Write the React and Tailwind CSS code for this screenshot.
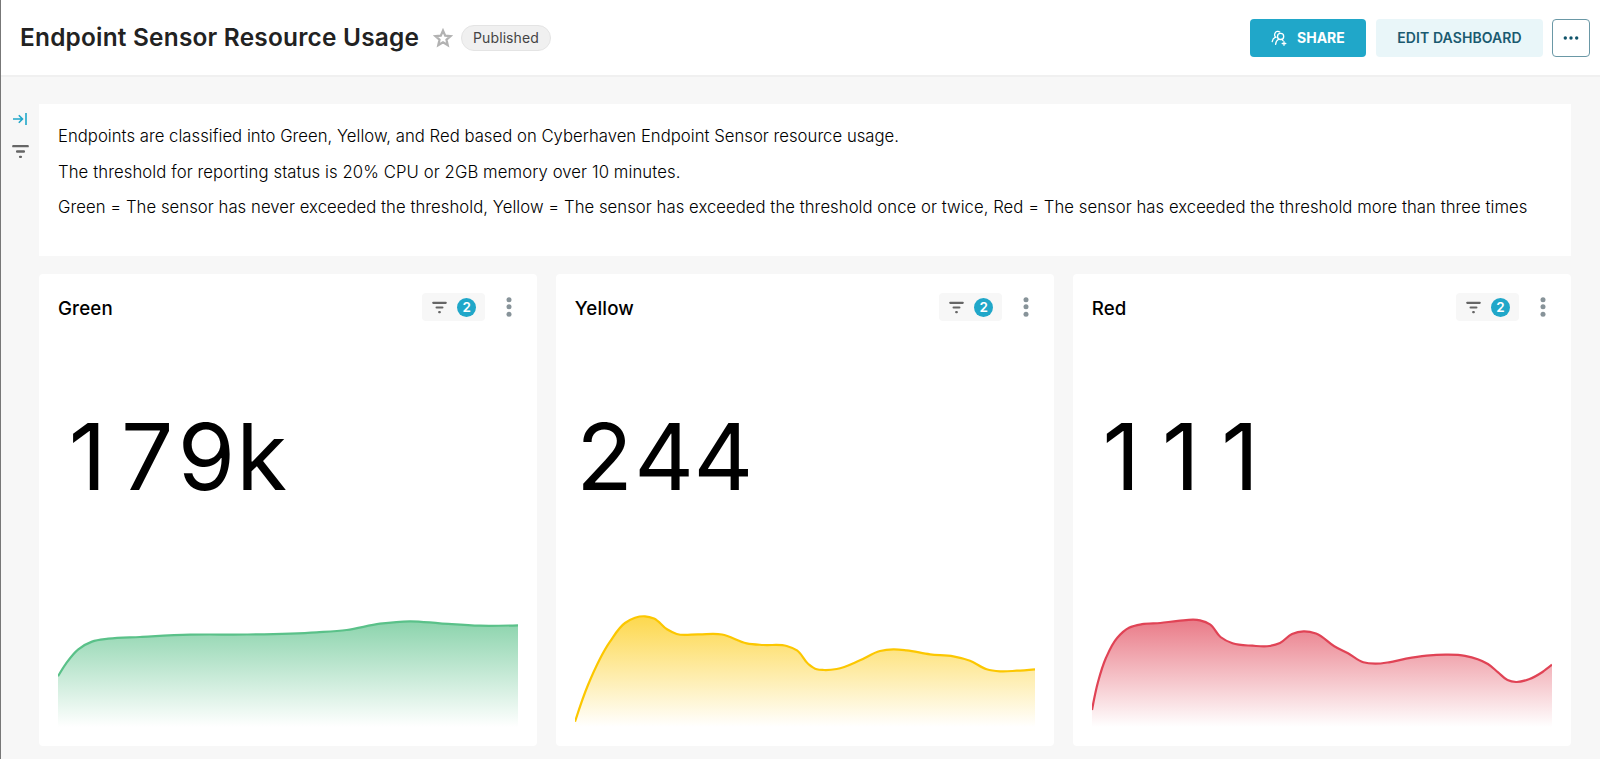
import React from 'react';

const cards = [
  {
    title: 'Green',
    value: '179k',
    color: '#5ac189',
    points: [
      [0, 76.3], [8, 63.6], [20.3, 49.3], [34, 41.6], [50.3, 38.7], [82, 37], [132, 34.7], [188.7, 34.5],
      [258.7, 32.3], [288.7, 30], [322, 23.7], [352, 21.3], [382, 23.3], [422, 25.7], [460, 25.3],
    ],
  },
  {
    title: 'Yellow',
    value: '244',
    color: '#fcc700',
    points: [
      [0, 121.7], [13, 85], [35, 41.7], [50, 23], [60, 17.7], [70, 16.3], [79, 18.5],
      [92, 29.3], [101.7, 34], [123.3, 34.3], [147, 34.5], [171.7, 43.3], [188.3, 45],
      [211.7, 46], [222, 50.4], [233.3, 64], [241.7, 69.3], [249, 70], [261.7, 69], [285, 60.3],
      [305, 51], [318.3, 49.3], [331.7, 50.3], [355, 54.3], [378.3, 56.3], [395, 60.7], [411.7, 69.3],
      [425, 71.3], [441.7, 70.7], [460, 69.3],
    ],
  },
  {
    title: 'Red',
    value: '111',
    color: '#e04355',
    points: [
      [0, 110], [6, 82], [13.8, 58.3], [25.3, 37.7], [37, 27.8], [50, 24.2], [68.3, 23], [86, 20.9],
      [108, 20.4], [118, 24.4], [128.5, 37], [140.5, 43.3], [160.4, 45.7], [177.5, 46], [188, 43],
      [200, 34], [211.6, 31.3], [224, 33.5], [242.3, 46.3], [256, 53.3], [271.3, 62.3], [283.3, 63.7],
      [296.9, 62.3], [314, 58.7], [334.5, 55.7], [354.9, 54.7], [373, 55.8], [395.9, 64], [406.1, 72.3],
      [415.5, 80], [424, 82], [436.9, 79.3], [450.5, 72], [460, 64.7],
    ],
  },
];

// Cubic through the points, tangents weighted by chord length
const smoothPath = (pts) => {
  const last = pts.length - 1;
  const len = pts.slice(1).map((p, i) => Math.hypot(p[0] - pts[i][0], p[1] - pts[i][1]));
  const dir = pts.slice(1).map((p, i) => [(p[0] - pts[i][0]) / len[i], (p[1] - pts[i][1]) / len[i]]);
  const tangent = pts.map((_, i) => {
    if (i === 0 || i === last) return [0, 0];
    const sum = len[i - 1] + len[i];
    return [0, 1].map((k) => (dir[i - 1][k] * len[i] + dir[i][k] * len[i - 1]) / sum);
  });
  tangent[0] = [0, 1].map((k) => 1.5 * dir[0][k] - 0.5 * tangent[1][k]);
  tangent[last] = [0, 1].map((k) => 1.5 * dir[last - 1][k] - 0.5 * tangent[last - 1][k]);

  let d = `M${pts[0][0]},${pts[0][1]}`;
  for (let i = 1; i <= last; i++) {
    const h = len[i - 1] / 3;
    const [a, b] = [pts[i - 1], pts[i]];
    const [ta, tb] = [tangent[i - 1], tangent[i]];
    d += `C${a[0] + ta[0] * h},${a[1] + ta[1] * h} ${b[0] - tb[0] * h},${b[1] - tb[1] * h} ${b[0]},${b[1]}`;
  }
  return d;
};

const FilterIcon = ({ className }) => (
  <svg viewBox="0 0 16 14" fill="none" stroke="#666" strokeWidth="2.2" strokeLinecap="round" className={className}>
    <path d="M1.2 2h13.6M4.8 7h6.4M7.6 12h.8" />
  </svg>
);

const Trend = ({ id, color, points }) => {
  const line = smoothPath(points);
  const top = Math.min(...points.map((p) => p[1]));
  return (
    <svg viewBox="0 0 460 127" className="block h-[127px] w-[460px]">
      <defs>
        <linearGradient id={id} gradientUnits="userSpaceOnUse" x1="0" y1={top} x2="0" y2="127">
          <stop offset="0" stopColor={color} />
          <stop offset="1" stopColor="#fff" />
        </linearGradient>
      </defs>
      <path d={`${line}V127H0Z`} fill={`url(#${id})`} opacity="0.7" />
      <path d={line} fill="none" stroke={color} strokeWidth="2.2" />
    </svg>
  );
};

// Digits sit in equal cells, a trailing unit keeps its own width
const BigNumber = ({ value }) => (
  <div className="mt-[85px] flex text-[92.6px] leading-[100px] text-black">
    {value.split('').map((char, i) => (
      <span key={i} className={/\d/.test(char) ? 'w-[59.4px] text-center' : ''}>
        {char}
      </span>
    ))}
  </div>
);

const MetricCard = ({ title, value, color, points }) => (
  <div className="flex h-[472px] flex-1 flex-col rounded bg-white p-[19px]">
    <div className="flex h-7 items-center">
      <h2 className="flex-1 pt-[3px] text-[18.7px] font-medium leading-7 tracking-[0.15px] text-black">{title}</h2>
      <div className="flex h-7 w-[63px] items-center justify-between rounded bg-[#f7f7f7] pl-2.5 pr-[9px]">
        <FilterIcon className="h-[13px] w-[15px]" />
        <span className="flex h-[19px] w-[19px] items-center justify-center rounded-full bg-[#20a7c9] pt-px text-[13.5px] font-semibold leading-none text-white">
          2
        </span>
      </div>
      <svg viewBox="0 0 6 20" fill="#879399" className="ml-[21px] mr-[6px] h-5 w-1.5">
        <circle cx="3" cy="2.8" r="2.5" />
        <circle cx="3" cy="9.8" r="2.5" />
        <circle cx="3" cy="17.2" r="2.5" />
      </svg>
    </div>
    <BigNumber value={value} />
    <div className="mt-auto">
      <Trend id={`trend-${title}`} color={color} points={points} />
    </div>
  </div>
);

const App = () => {
  return (
    <div className="h-[759px] w-[1600px] overflow-hidden border-l border-[#777] bg-[#f7f7f7] font-['Inter',sans-serif]">
      {/* Header */}
      <header className="flex h-[77px] items-center border-b-2 border-[#f0f0f0] bg-white pl-[19px] pr-2.5">
        <h1 className="w-[413px] whitespace-nowrap text-[24.4px] font-semibold tracking-[0.22px] text-[#222]">
          Endpoint Sensor Resource Usage
        </h1>
        <svg viewBox="0 0 20 20" fill="none" stroke="#b2b2b2" strokeWidth="2.3" className="h-5 w-5">
          <path d="M10 2.6l2.2 5 5.4.5-4.1 3.6 1.2 5.4-4.7-2.8-4.7 2.8 1.2-5.4L2.4 8.1l5.4-.5z" />
        </svg>
        <span className="ml-[8px] flex h-[26px] w-[90px] items-center justify-center rounded-full border border-[#e4e4e4] bg-[#f0f0f0] text-[14px] tracking-[0.1px] text-[#444]">
          Published
        </span>

        <div className="ml-auto flex items-center">
          <button className="flex h-[38px] w-[116px] items-center rounded bg-[#20a7c9] pl-[21px] text-[14px] font-bold text-white">
            <svg viewBox="0 0 16 16" fill="none" stroke="currentColor" strokeWidth="1.3" strokeLinecap="round" className="mr-[10px] h-4 w-4">
              <circle cx="9.6" cy="6.4" r="3.1" />
              <path d="M5 7.4A3.2 3.2 0 1 1 8.8 2M4.4 7.2C2.6 8 1.5 9.5 1.2 11.6M7.6 9.2C5.8 10.2 4.8 12 4.6 14.4M11 9.5l1 1M13 11.7v3.6M11.2 13.5h3.6" />
            </svg>
            SHARE
          </button>
          <button className="ml-2.5 h-[38px] w-[167px] rounded bg-[#e9f6f9] text-[14px] font-semibold tracking-[0.08px] text-[#1a5a70]">
            EDIT DASHBOARD
          </button>
          <button className="ml-[9px] flex h-[38px] w-[38px] items-center justify-center rounded border border-[#6a98a6] bg-white">
            <svg viewBox="0 0 16 4" fill="#10536a" className="h-1 w-4">
              <circle cx="2.3" cy="2" r="1.7" />
              <circle cx="8" cy="2" r="1.7" />
              <circle cx="13.7" cy="2" r="1.7" />
            </svg>
          </button>
        </div>
      </header>

      <div className="flex">
        {/* Collapsed filter bar */}
        <aside className="flex w-[38px] flex-col items-center pt-[34px]">
          <svg viewBox="0 0 16 16" fill="none" stroke="#20a7c9" strokeWidth="1.6" className="h-4 w-4">
            <path d="M1 8h9.5M6.8 4.2 10.5 8l-3.7 3.8M14 2v12" />
          </svg>
          <FilterIcon className="mt-[17px] h-[15px] w-[17px]" />
        </aside>

        <main className="w-[1532px] pt-[27px]">
          <div className="h-[152px] bg-white px-[19px] pt-[15px] text-[16.7px] font-light leading-[35.5px] text-black">
            <p className="tracking-[0.02px]">
              Endpoints are classified into Green, Yellow, and Red based on Cyberhaven Endpoint Sensor resource usage.
            </p>
            <p className="tracking-[0.09px]">
              The threshold for reporting status is 20% CPU or 2GB memory over 10 minutes.
            </p>
            <p className="whitespace-nowrap tracking-[0.045px]">
              Green = The sensor has never exceeded the threshold, Yellow = The sensor has exceeded the threshold once or
              twice, Red = The sensor has exceeded the threshold more than three times
            </p>
          </div>
          <div className="mt-[18px] flex gap-[18.5px]">
            {cards.map((card) => (
              <MetricCard key={card.title} {...card} />
            ))}
          </div>
        </main>
      </div>
    </div>
  );
};

export default App;
